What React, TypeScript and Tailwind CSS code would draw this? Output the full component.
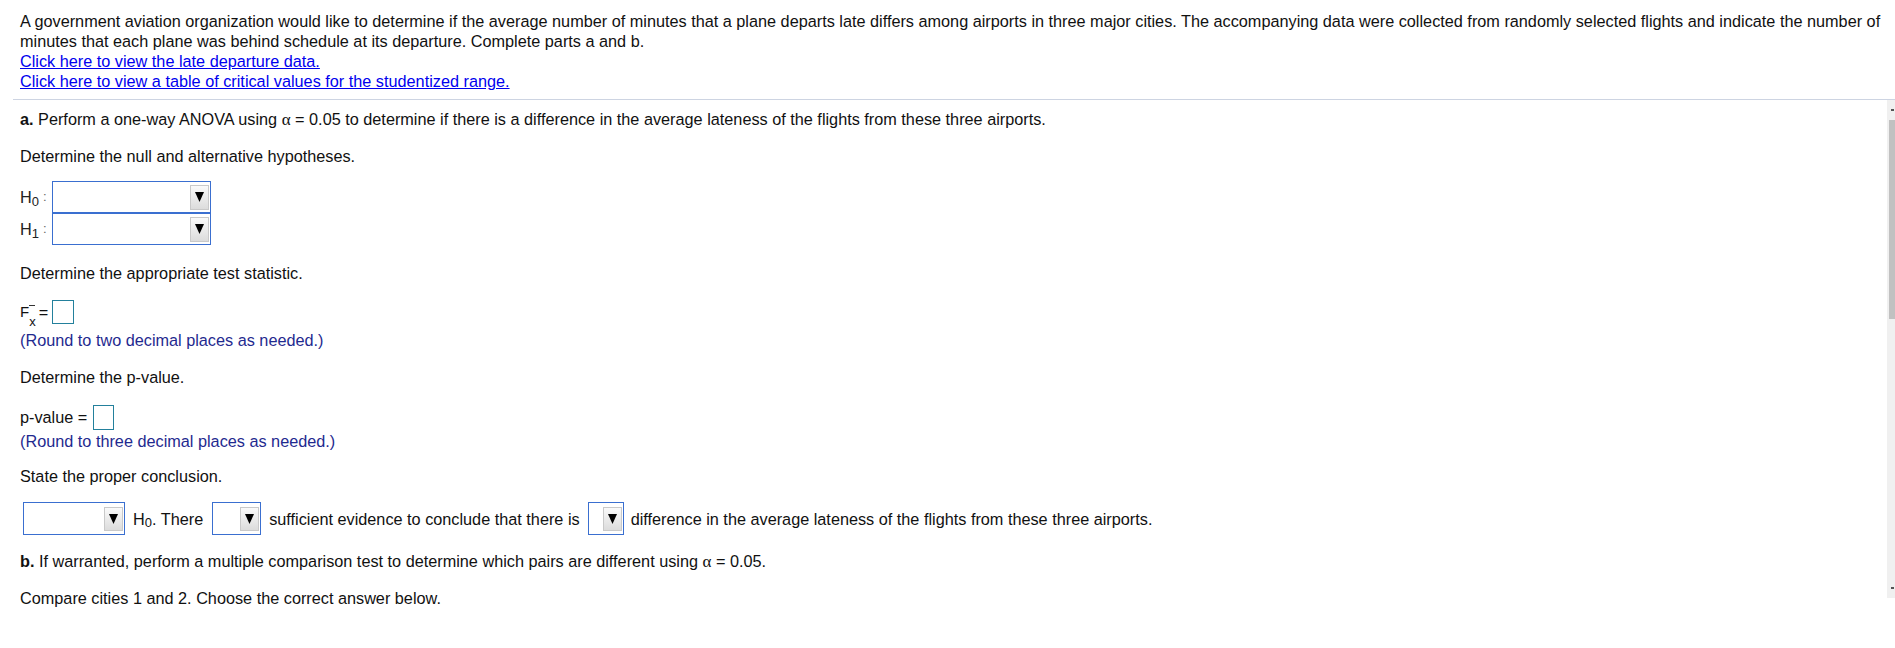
import React from 'react'

const font = { fontFamily: '"Liberation Sans", Arial, sans-serif' }

function Dropdown({ width, height, btnH = 25 }: { width: number; height: number; btnH?: number }) {
  return (
    <div
      className="flex items-center justify-end border border-[#3a6fd0] bg-white pr-[1px] shrink-0"
      style={{ width, height }}
    >
      <div
        className="flex w-[19px] items-center justify-center border border-[#c9c9c9] bg-gradient-to-b from-[#fafafa] to-[#dcdcdc]"
        style={{ height: btnH }}
      >
        <svg width="9" height="10" viewBox="0 0 9 10">
          <polygon points="0,0 9,0 4.5,10" fill="#000" />
        </svg>
      </div>
    </div>
  )
}

function AnswerBox({ w, h }: { w: number; h: number }) {
  return <div className="border border-[#23809c] bg-white shrink-0" style={{ width: w, height: h }} />
}

function Alpha() {
  return <span className="font-['Liberation_Serif',serif] text-[17px]">α</span>
}

function HLabel({ sub }: { sub: string }) {
  return (
    <div className="flex w-[32px] items-center text-[#222]">
      <span>H</span>
      <span className="relative top-[4px] text-[13px] leading-none">{sub}</span>
      <span className="ml-[4px] text-[#666] text-[13px]">:</span>
    </div>
  )
}

export default function App() {
  return (
    <div className="h-[648px] w-[1895px] overflow-hidden bg-white text-[16.25px] leading-[20px] text-[#111]" style={font}>
      {/* Question stem */}
      <div className="pl-5 pr-2 pt-[11px] pb-[8px]">
        <p>
          A government aviation organization would like to determine if the average number of minutes that a plane
          departs late differs among airports in three major cities. The accompanying data were collected from randomly
          selected flights and indicate the number of minutes that each plane was behind schedule at its departure.
          Complete parts a and b.
        </p>
        <a className="block w-fit text-[#0000ee] underline">Click here to view the late departure data.</a>
        <a className="block w-fit text-[#0000ee] underline">
          Click here to view a table of critical values for the studentized range.
        </a>
      </div>
      <div className="ml-[13px] h-px bg-[#cdd4e2]" />

      {/* Scrolling answer pane */}
      <div className="flex">
        <div className="flex-1 pl-5 pt-[9px]">
          <p>
            <b>a.</b> Perform a one-way ANOVA using <Alpha /> = 0.05 to determine if there is a difference in the
            average lateness of the flights from these three airports.
          </p>
          <p className="mt-[16px]">Determine the null and alternative hypotheses.</p>

          <div className="mt-[15px]">
            <div className="flex items-center">
              <HLabel sub="0" />
              <Dropdown width={159} height={32} />
            </div>
            <div className="flex items-center">
              <HLabel sub="1" />
              <Dropdown width={159} height={32} />
            </div>
          </div>

          <p className="mt-[18px]">Determine the appropriate test statistic.</p>

          <div className="mt-[17px] flex h-[24px] items-center">
            <span className="text-[15px]">F</span>
            <span className="inline-flex flex-col items-center self-start">
              <span className="mt-[5px] block h-px w-[6px] bg-[#333]" />
              <span className="mt-[9px] text-[13px] leading-none">x</span>
            </span>
            <span className="ml-[3px]">=</span>
            <span className="ml-[4px]">
              <AnswerBox w={22} h={24} />
            </span>
          </div>
          <p className="mt-[6px] text-[#1f2a8f]">(Round to two decimal places as needed.)</p>

          <p className="mt-[17px]">Determine the p-value.</p>

          <div className="mt-[18px] flex h-[24px] items-center gap-[6px]">
            <span>p-value =</span>
            <AnswerBox w={21} h={25} />
          </div>
          <p className="mt-[2px] text-[#1f2a8f]">(Round to three decimal places as needed.)</p>

          <p className="mt-[15px]">State the proper conclusion.</p>

          <div className="mt-[16px] flex h-[33px] items-center">
            <span className="ml-[3px]">
              <Dropdown width={102} height={33} btnH={24} />
            </span>
            <span className="ml-[8px] flex items-center">
              H<span className="relative top-[4px] text-[13px] leading-none">0</span>. There
            </span>
            <span className="ml-[9px]">
              <Dropdown width={49} height={33} btnH={24} />
            </span>
            <span className="ml-[8px]">sufficient evidence to conclude that there is</span>
            <span className="ml-[8px]">
              <Dropdown width={36} height={33} btnH={24} />
            </span>
            <span className="ml-[7px]">difference in the average lateness of the flights from these three airports.</span>
          </div>

          <p className="mt-[16px]">
            <b>b.</b> If warranted, perform a multiple comparison test to determine which pairs are different using{' '}
            <Alpha /> = 0.05.
          </p>
          <p className="mt-[16px]">Compare cities 1 and 2. Choose the correct answer below.</p>
        </div>

        {/* Scrollbar (cut off at the right edge) */}
        <div className="flex h-[498px] w-[8px] flex-col bg-[#f0f0f0]">
          <div className="flex h-[20px] items-center justify-end pr-[1px]">
            <span className="h-[2px] w-[3px] bg-[#555]" />
          </div>
          <div className="ml-[2px] h-[199px] bg-[#c1c1c1]" />
          <div className="flex-1" />
          <div className="flex h-[20px] items-center justify-end pr-[1px]">
            <span className="h-[2px] w-[3px] bg-[#555]" />
          </div>
        </div>
      </div>
    </div>
  )
}
